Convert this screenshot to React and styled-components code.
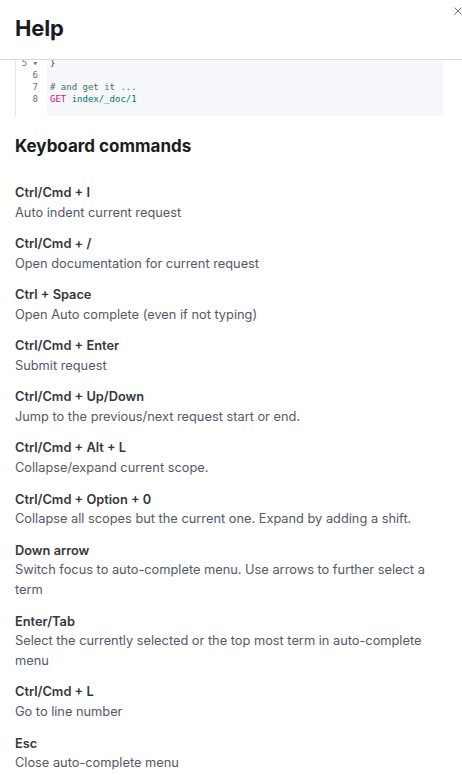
import React from 'react';
import styled, { createGlobalStyle } from 'styled-components';

const GlobalStyle = createGlobalStyle`
    html, body {
        margin: 0;
        padding: 0;
        background: #fff;
        font-family: Inter, "Noto Sans", sans-serif;
    }
`

const Flyout = styled.div`
    width: 462px;
    height: 775px;
    overflow: hidden;
    position: relative;
    background: #fff;
`

const Header = styled.div`
    height: 60px;
    box-sizing: border-box;
    border-bottom: 1px solid #d3dae6;
    padding: 14px 15px 0;
`

const Title = styled.h1`
    margin: 0;
    font-size: 22px;
    line-height: 28px;
    font-weight: 700;
    color: #1a1c21;
    letter-spacing: -0.2px;
`

const CloseBtn = styled.button`
    position: absolute;
    top: 4px;
    right: -2px;
    width: 12px;
    height: 14px;
    border: none;
    background: none;
    padding: 0;
    cursor: pointer;
    display: flex;
    align-items: center;
    justify-content: center;
`

const Body = styled.div`
    padding: 0 15px;
`

const CodeBox = styled.div`
    display: flex;
    height: 56px;
    margin-right: 4px;
    overflow: hidden;
    font-family: "DejaVu Sans Mono", "Liberation Mono", monospace;
    font-size: 9px;
    line-height: 12px;
`

const Gutter = styled.div`
    width: 22px;
    flex-shrink: 0;
    border-left: 1px solid #e4e7ec;
    padding-right: 9px;
    text-align: right;
    color: #69707d;
    margin-top: -3px;
`

const Code = styled.div`
    flex: 1;
    background: #f5f7fa;
    padding-left: 3px;
    color: #343741;
    > div {
        margin-top: -3px;
    }
`

const Tok = styled.span`
    color: ${props => props.c};
`

const Section = styled.h2`
    margin: 0;
    padding: 18px 0 0;
    font-size: 17px;
    line-height: 24px;
    font-weight: 700;
    color: #1a1c21;
`

const List = styled.div`
    display: flex;
    flex-direction: column;
    gap: 11.5px;
    padding-top: 25px;
`

const Item = styled.div`
    font-size: 12.8px;
    line-height: 19.8px;
`

const Keys = styled.div`
    font-weight: 600;
    color: #343741;
`

const Desc = styled.div`
    color: #535966;
    padding-right: 18px;
`

const commands = [
    ['Ctrl/Cmd + I', 'Auto indent current request'],
    ['Ctrl/Cmd + /', 'Open documentation for current request'],
    ['Ctrl + Space', 'Open Auto complete (even if not typing)'],
    ['Ctrl/Cmd + Enter', 'Submit request'],
    ['Ctrl/Cmd + Up/Down', 'Jump to the previous/next request start or end.'],
    ['Ctrl/Cmd + Alt + L', 'Collapse/expand current scope.'],
    ['Ctrl/Cmd + Option + 0', 'Collapse all scopes but the current one. Expand by adding a shift.'],
    ['Down arrow', 'Switch focus to auto-complete menu. Use arrows to further select a term'],
    ['Enter/Tab', 'Select the currently selected or the top most term in auto-complete menu'],
    ['Ctrl/Cmd + L', 'Go to line number'],
    ['Esc', 'Close auto-complete menu'],
]

function App(){
    return(
        <Flyout>
            <GlobalStyle />
            <Header>
                <Title>Help</Title>
            </Header>
            <CloseBtn aria-label="Close">
                <svg width="8" height="8" viewBox="0 0 8 8">
                    <path d="M0.5 0.5 L7.5 7.5 M7.5 0.5 L0.5 7.5" stroke="#69707d" strokeWidth="1" />
                </svg>
            </CloseBtn>
            <Body>
                <CodeBox>
                    <Gutter>
                        <div>5 ▾</div>
                        <div>6</div>
                        <div>7</div>
                        <div>8</div>
                    </Gutter>
                    <Code>
                        <div>
                            <div>&#125;</div>
                            <div>&nbsp;</div>
                            <div><Tok c="#41755c"># and get it ...</Tok></div>
                            <div><Tok c="#dd0a73">GET</Tok> <Tok c="#00756c">index/_doc/1</Tok></div>
                        </div>
                    </Code>
                </CodeBox>
                <Section>Keyboard commands</Section>
                <List>
                    {commands.map(([k, d]) => (
                        <Item key={k}>
                            <Keys>{k}</Keys>
                            <Desc>{d}</Desc>
                        </Item>
                    ))}
                </List>
            </Body>
        </Flyout>
    );
}

export default App;
